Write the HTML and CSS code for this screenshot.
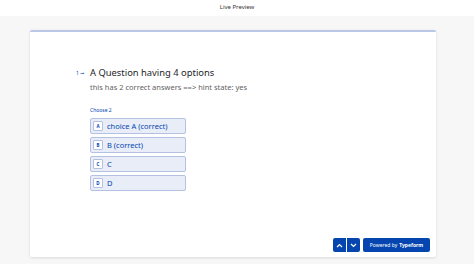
FILE: index.html
```html
<!DOCTYPE html>
<html lang="en">
<head>
  <meta charset="UTF-8">
  <title>Live Preview</title>
  <link rel="stylesheet" href="styles.css">
</head>
<body>
  <div class="topbar">Live Preview</div>

  <div class="stage">
    <div class="card">
      <div class="question">
        <div class="q-head">
          <span class="q-num">1<span class="arrow">&#10142;</span></span>
          <h1>A Question having 4 options</h1>
        </div>
        <p class="desc">this has 2 correct answers ==&gt; hint state: yes</p>
        <div class="hint">Choose 2</div>

        <div class="choices">
          <div class="choice"><span class="key">A</span>choice A (correct)</div>
          <div class="choice"><span class="key">B</span>B (correct)</div>
          <div class="choice"><span class="key">C</span>C</div>
          <div class="choice"><span class="key">D</span>D</div>
        </div>
      </div>

      <div class="footer">
        <div class="nav">
          <button class="nav-btn">
            <svg width="7" height="5" viewBox="0 0 7 5"><path d="M1 4 L3.5 1.5 L6 4" fill="none" stroke="#fff" stroke-width="1.2"/></svg>
          </button>
          <button class="nav-btn">
            <svg width="7" height="5" viewBox="0 0 7 5"><path d="M1 1 L3.5 3.5 L6 1" fill="none" stroke="#fff" stroke-width="1.2"/></svg>
          </button>
        </div>
        <button class="powered">Powered by <b>Typeform</b></button>
      </div>
    </div>
  </div>
</body>
</html>
```

FILE: styles.css
```css
:root {
  --blue: #0445af;
  --choice-bg: #e8edf8;
  --choice-border: #b3c1e2;
}

body {
  margin: 0;
  font-family: 'Noto Sans', 'Open Sans', sans-serif;
  background: #f7f7f7;
  color: #262627;
}

.topbar {
  height: 16px;
  background: white;
  text-align: center;
  font-size: 6px;
  line-height: 14px;
  color: #333;
}

.stage {
  padding: 14px 38px 7px 30px;
}

.card {
  background: white;
  height: 225px;
  border-top: 2px solid #b9c8e6;
  box-shadow: 0 1px 3px rgba(0,0,0,0.12);
  border-radius: 2px;
  display: flex;
  flex-direction: column;
  justify-content: space-between;
}

.question {
  padding: 34px 0 0 60px;
}

.q-head {
  display: flex;
  align-items: center;
  margin-left: -14px;
  gap: 3px;
}

.q-num {
  font-size: 5px;
  color: var(--blue);
  width: 11px;
  display: flex;
  align-items: center;
  gap: 1px;
}

.arrow {
  font-size: 5px;
}

h1 {
  font-size: 9.4px;
  font-weight: normal;
  margin: 0;
  line-height: 14px;
}

.desc {
  margin: 2px 0 0;
  font-size: 7.5px;
  color: #636363;
}

.hint {
  margin-top: 15px;
  font-size: 5px;
  color: var(--blue);
}

.choices {
  margin-top: 5px;
  display: flex;
  flex-direction: column;
  gap: 3px;
  width: 96px;
}

.choice {
  height: 14px;
  background: var(--choice-bg);
  border: 1px solid var(--choice-border);
  border-radius: 2px;
  display: flex;
  align-items: center;
  gap: 4px;
  padding-left: 2px;
  font-size: 7.5px;
  color: var(--blue);
}

.key {
  width: 8px;
  height: 8px;
  background: white;
  border: 1px solid var(--choice-border);
  border-radius: 1px;
  font-size: 4.5px;
  font-weight: bold;
  display: flex;
  align-items: center;
  justify-content: center;
}

.footer {
  display: flex;
  justify-content: flex-end;
  gap: 3px;
  padding: 0 6px 5px 0;
}

.nav {
  display: flex;
  gap: 1px;
}

button {
  border: none;
  background: var(--blue);
  color: white;
  border-radius: 2px;
  height: 14px;
  padding: 0;
  font-family: inherit;
  display: flex;
  align-items: center;
  justify-content: center;
}

.nav-btn {
  width: 13px;
}

.nav-btn:first-child {
  border-radius: 2px 0 0 2px;
}

.nav-btn:last-child {
  border-radius: 0 2px 2px 0;
}

.powered {
  width: 67px;
  font-size: 5px;
  gap: 2px;
}
```
